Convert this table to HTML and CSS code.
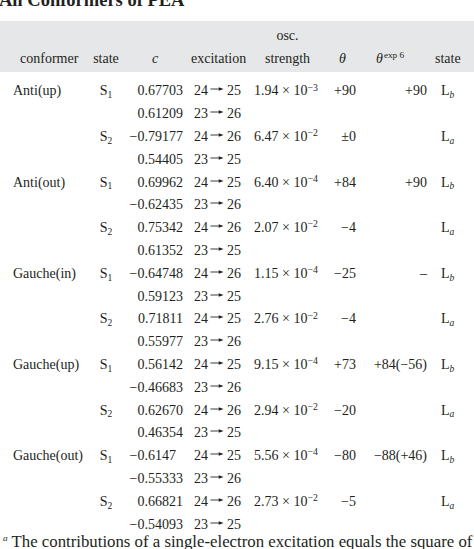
FILE: index.html
```
<!DOCTYPE html>
<html>
<head>
<meta charset="utf-8">
<link rel="stylesheet" href="styles.css">
</head>
<body>
<h1 class="title">All Conformers of PEA</h1>
<table class="data">
<colgroup>
<col class="w-conf"><col class="w-st"><col class="w-c"><col class="w-ex"><col class="w-osc"><col class="w-th"><col class="w-thx"><col class="w-ls">
</colgroup>
<thead>
<tr>
<th class="conf">conformer</th>
<th class="st">state</th>
<th class="c"><i>c</i></th>
<th class="ex">excitation</th>
<th class="osc">osc.<br>strength</th>
<th class="th"><i>θ</i></th>
<th class="thx"><i>θ</i><sup class="hsup">exp 6</sup></th>
<th class="ls">state</th>
</tr>
</thead>
<tbody>
<tr><td class="conf">Anti(up)</td><td class="st">S<sub>1</sub></td><td class="c">0.67703</td><td class="ex">24<svg class="arr" viewBox="0 0 16 6"><path d="M0.5 3H12"/><polygon points="10,1 15.5,3 10,5"/></svg>25</td><td class="osc">1.94 × 10<sup>−3</sup></td><td class="th">+90</td><td class="thx">+90</td><td class="ls">L<sub><i>b</i></sub></td></tr>
<tr><td class="conf"></td><td class="st"></td><td class="c">0.61209</td><td class="ex">23<svg class="arr" viewBox="0 0 16 6"><path d="M0.5 3H12"/><polygon points="10,1 15.5,3 10,5"/></svg>26</td><td class="osc"></td><td class="th"></td><td class="thx"></td><td class="ls"></td></tr>
<tr><td class="conf"></td><td class="st">S<sub>2</sub></td><td class="c">−0.79177</td><td class="ex">24<svg class="arr" viewBox="0 0 16 6"><path d="M0.5 3H12"/><polygon points="10,1 15.5,3 10,5"/></svg>26</td><td class="osc">6.47 × 10<sup>−2</sup></td><td class="th">±0</td><td class="thx"></td><td class="ls">L<sub><i>a</i></sub></td></tr>
<tr><td class="conf"></td><td class="st"></td><td class="c">0.54405</td><td class="ex">23<svg class="arr" viewBox="0 0 16 6"><path d="M0.5 3H12"/><polygon points="10,1 15.5,3 10,5"/></svg>25</td><td class="osc"></td><td class="th"></td><td class="thx"></td><td class="ls"></td></tr>
<tr><td class="conf">Anti(out)</td><td class="st">S<sub>1</sub></td><td class="c">0.69962</td><td class="ex">24<svg class="arr" viewBox="0 0 16 6"><path d="M0.5 3H12"/><polygon points="10,1 15.5,3 10,5"/></svg>25</td><td class="osc">6.40 × 10<sup>−4</sup></td><td class="th">+84</td><td class="thx">+90</td><td class="ls">L<sub><i>b</i></sub></td></tr>
<tr><td class="conf"></td><td class="st"></td><td class="c">−0.62435</td><td class="ex">23<svg class="arr" viewBox="0 0 16 6"><path d="M0.5 3H12"/><polygon points="10,1 15.5,3 10,5"/></svg>26</td><td class="osc"></td><td class="th"></td><td class="thx"></td><td class="ls"></td></tr>
<tr><td class="conf"></td><td class="st">S<sub>2</sub></td><td class="c">0.75342</td><td class="ex">24<svg class="arr" viewBox="0 0 16 6"><path d="M0.5 3H12"/><polygon points="10,1 15.5,3 10,5"/></svg>26</td><td class="osc">2.07 × 10<sup>−2</sup></td><td class="th">−4</td><td class="thx"></td><td class="ls">L<sub><i>a</i></sub></td></tr>
<tr><td class="conf"></td><td class="st"></td><td class="c">0.61352</td><td class="ex">23<svg class="arr" viewBox="0 0 16 6"><path d="M0.5 3H12"/><polygon points="10,1 15.5,3 10,5"/></svg>25</td><td class="osc"></td><td class="th"></td><td class="thx"></td><td class="ls"></td></tr>
<tr><td class="conf">Gauche(in)</td><td class="st">S<sub>1</sub></td><td class="c">−0.64748</td><td class="ex">24<svg class="arr" viewBox="0 0 16 6"><path d="M0.5 3H12"/><polygon points="10,1 15.5,3 10,5"/></svg>26</td><td class="osc">1.15 × 10<sup>−4</sup></td><td class="th">−25</td><td class="thx">–</td><td class="ls">L<sub><i>b</i></sub></td></tr>
<tr><td class="conf"></td><td class="st"></td><td class="c">0.59123</td><td class="ex">23<svg class="arr" viewBox="0 0 16 6"><path d="M0.5 3H12"/><polygon points="10,1 15.5,3 10,5"/></svg>25</td><td class="osc"></td><td class="th"></td><td class="thx"></td><td class="ls"></td></tr>
<tr><td class="conf"></td><td class="st">S<sub>2</sub></td><td class="c">0.71811</td><td class="ex">24<svg class="arr" viewBox="0 0 16 6"><path d="M0.5 3H12"/><polygon points="10,1 15.5,3 10,5"/></svg>25</td><td class="osc">2.76 × 10<sup>−2</sup></td><td class="th">−4</td><td class="thx"></td><td class="ls">L<sub><i>a</i></sub></td></tr>
<tr><td class="conf"></td><td class="st"></td><td class="c">0.55977</td><td class="ex">23<svg class="arr" viewBox="0 0 16 6"><path d="M0.5 3H12"/><polygon points="10,1 15.5,3 10,5"/></svg>26</td><td class="osc"></td><td class="th"></td><td class="thx"></td><td class="ls"></td></tr>
<tr><td class="conf">Gauche(up)</td><td class="st">S<sub>1</sub></td><td class="c">0.56142</td><td class="ex">24<svg class="arr" viewBox="0 0 16 6"><path d="M0.5 3H12"/><polygon points="10,1 15.5,3 10,5"/></svg>25</td><td class="osc">9.15 × 10<sup>−4</sup></td><td class="th">+73</td><td class="thx">+84(−56)</td><td class="ls">L<sub><i>b</i></sub></td></tr>
<tr><td class="conf"></td><td class="st"></td><td class="c">−0.46683</td><td class="ex">23<svg class="arr" viewBox="0 0 16 6"><path d="M0.5 3H12"/><polygon points="10,1 15.5,3 10,5"/></svg>26</td><td class="osc"></td><td class="th"></td><td class="thx"></td><td class="ls"></td></tr>
<tr><td class="conf"></td><td class="st">S<sub>2</sub></td><td class="c">0.62670</td><td class="ex">24<svg class="arr" viewBox="0 0 16 6"><path d="M0.5 3H12"/><polygon points="10,1 15.5,3 10,5"/></svg>26</td><td class="osc">2.94 × 10<sup>−2</sup></td><td class="th">−20</td><td class="thx"></td><td class="ls">L<sub><i>a</i></sub></td></tr>
<tr><td class="conf"></td><td class="st"></td><td class="c">0.46354</td><td class="ex">23<svg class="arr" viewBox="0 0 16 6"><path d="M0.5 3H12"/><polygon points="10,1 15.5,3 10,5"/></svg>25</td><td class="osc"></td><td class="th"></td><td class="thx"></td><td class="ls"></td></tr>
<tr><td class="conf">Gauche(out)</td><td class="st">S<sub>1</sub></td><td class="c">−0.6147<span class="pad">3</span></td><td class="ex">24<svg class="arr" viewBox="0 0 16 6"><path d="M0.5 3H12"/><polygon points="10,1 15.5,3 10,5"/></svg>25</td><td class="osc">5.56 × 10<sup>−4</sup></td><td class="th">−80</td><td class="thx">−88(+46)</td><td class="ls">L<sub><i>b</i></sub></td></tr>
<tr><td class="conf"></td><td class="st"></td><td class="c">−0.55333</td><td class="ex">23<svg class="arr" viewBox="0 0 16 6"><path d="M0.5 3H12"/><polygon points="10,1 15.5,3 10,5"/></svg>26</td><td class="osc"></td><td class="th"></td><td class="thx"></td><td class="ls"></td></tr>
<tr><td class="conf"></td><td class="st">S<sub>2</sub></td><td class="c">0.66821</td><td class="ex">24<svg class="arr" viewBox="0 0 16 6"><path d="M0.5 3H12"/><polygon points="10,1 15.5,3 10,5"/></svg>26</td><td class="osc">2.73 × 10<sup>−2</sup></td><td class="th">−5</td><td class="thx"></td><td class="ls">L<sub><i>a</i></sub></td></tr>
<tr><td class="conf"></td><td class="st"></td><td class="c">−0.54093</td><td class="ex">23<svg class="arr" viewBox="0 0 16 6"><path d="M0.5 3H12"/><polygon points="10,1 15.5,3 10,5"/></svg>25</td><td class="osc"></td><td class="th"></td><td class="thx"></td><td class="ls"></td></tr>
</tbody>
</table>
<p class="footnote"><sup class="fn">a</sup> The contributions of a single-electron excitation equals the square of</p>
</body>
</html>
```
FILE: styles.css
```
html, body {
  margin: 0;
  padding: 0;
  background: #ffffff;
}
body {
  width: 474px;
  height: 549px;
  overflow: hidden;
  font-family: "Liberation Serif", "Times New Roman", serif;
  color: #231f20;
}
.title {
  font-size: 18.5px;
  line-height: 18.5px;
  font-weight: bold;
  margin: -9.5px 0 12px -1px;
  white-space: nowrap;
}
.data {
  border-collapse: collapse;
  border-spacing: 0;
  table-layout: fixed;
  width: 474px;
  font-size: 14px;
}
.w-conf { width: 88px; }
.w-st { width: 36px; }
.w-c { width: 62px; }
.w-ex { width: 60px; }
.w-osc { width: 68px; }
.w-th { width: 44px; }
.w-thx { width: 72px; }
.w-ls { width: 44px; }

.data th {
  background: #e6e7e8;
  font-weight: normal;
  line-height: 23px;
  vertical-align: bottom;
  padding: 3px 0 2px 0;
  white-space: nowrap;
}
.data td {
  line-height: 22.8px;
  padding: 0;
  white-space: nowrap;
  vertical-align: top;
}
.data tbody tr:first-child td {
  padding-top: 8.4px;
}
sub, sup {
  line-height: 0;
  vertical-align: baseline;
  position: relative;
}
sub {
  font-size: 0.68em;
  top: 0.3em;
}
sup {
  font-size: 0.7em;
  top: -0.48em;
}
.hsup {
  font-size: 0.66em;
  top: -0.52em;
  margin-left: 1px;
}

th.conf { text-align: left; padding-left: 20px; }
td.conf { text-align: left; padding-left: 13px; }
.st { text-align: center; }
th.c { text-align: center; }
td.c { text-align: right; padding-right: 3px; }
th.ex { text-align: left; padding-left: 5px; }
td.ex { text-align: left; padding-left: 8px; }
th.osc { text-align: center; padding-left: 15px; }
td.osc { text-align: left; padding-left: 8px; }
th.th { text-align: right; padding-right: 12px; }
td.th { text-align: right; padding-right: 2px; }
th.thx { text-align: left; padding-left: 18px; }
td.thx { text-align: right; padding-right: 3px; }
th.ls { text-align: left; padding-left: 5px; }
td.ls { text-align: left; padding-left: 11px; }

.pad { visibility: hidden; }

.arr {
  width: 14px;
  height: 6px;
  margin: 0 3px 0 2px;
  vertical-align: 3px;
}
.arr path {
  stroke: #231f20;
  stroke-width: 1;
  fill: none;
}
.arr polygon {
  fill: #231f20;
}

.footnote {
  margin: -3.6px 0 0 0;
  padding-left: 3px;
  font-size: 16.8px;
  line-height: 17px;
  white-space: nowrap;
}
.fn {
  font-style: italic;
  font-size: 0.55em;
  top: -0.6em;
}
```
